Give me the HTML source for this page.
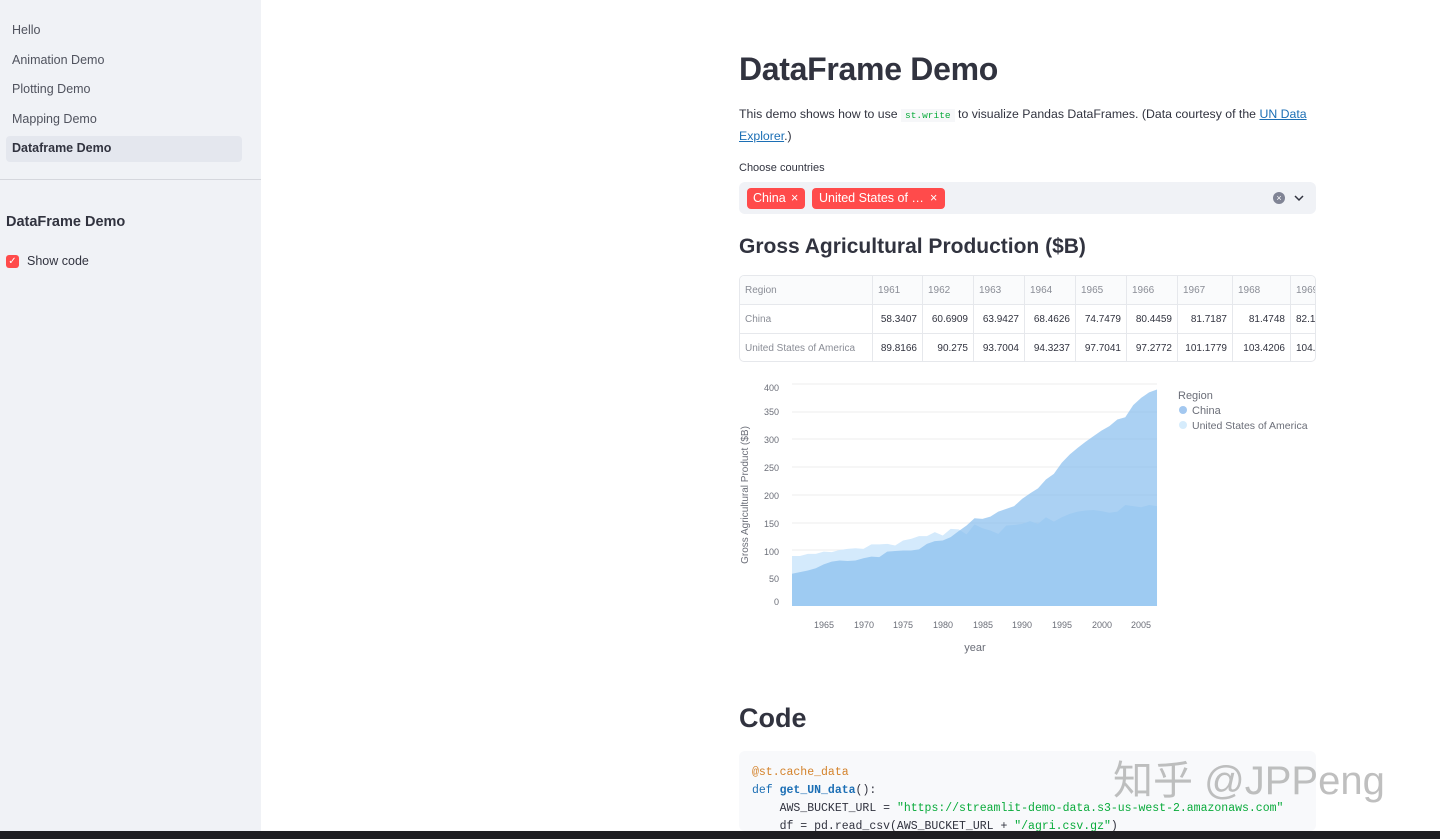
<!DOCTYPE html>
<html><head><meta charset="utf-8"><style>
*{margin:0;padding:0;box-sizing:border-box}
body{width:1440px;height:839px;overflow:hidden;background:#fff;font-family:"Liberation Sans",sans-serif;color:#31333f;position:relative}
.abs{position:absolute}
#side{left:0;top:0;width:261px;height:831px;background:#f0f2f6}
.nav{position:absolute;left:12px;font-size:12.5px;color:#50535e}
#bar{left:0;top:831px;width:1440px;height:8px;background:#1e1e22}
table{border-collapse:collapse;font-size:10px;table-layout:fixed}
td{border:1px solid #e6e8ec;height:29px;padding:0 5px;text-align:right;white-space:nowrap;overflow:hidden;color:#31333f}
td.h{color:#8a8d96;text-align:left}
tr:first-child td{background:#fafbfc}
.code{font-family:"Liberation Mono",monospace;font-size:11.5px;line-height:18px}
</style></head><body>
<div id="side" class="abs">
<div class="nav" style="top:23px">Hello</div>
<div class="nav" style="top:53px">Animation Demo</div>
<div class="nav" style="top:82px">Plotting Demo</div>
<div class="nav" style="top:112px">Mapping Demo</div>
<div class="abs" style="left:6px;top:136px;width:236px;height:26px;background:#e4e7ee;border-radius:4px"></div>
<div class="nav" style="top:141px;font-weight:bold;color:#31333f">Dataframe Demo</div>
<div class="abs" style="left:0;top:179px;width:261px;height:1px;background:#d5d7dd"></div>
<div class="abs" style="left:6px;top:214px;font-size:14.5px;font-weight:bold;color:#31333f">DataFrame Demo</div>
<div class="abs" style="left:6px;top:255px;width:13px;height:13px;background:#ff4b4b;border-radius:3px;color:#fff;font-size:10px;line-height:13px;text-align:center">✓</div>
<div class="abs" style="left:27px;top:254px;font-size:12.5px">Show code</div>
</div>

<div class="abs" style="left:739px;top:51px;font-size:32px;font-weight:bold;letter-spacing:-0.3px">DataFrame Demo</div>
<div class="abs" style="left:739px;top:104px;width:580px;font-size:12.3px;line-height:21px">This demo shows how to use <span style="font-family:'Liberation Mono',monospace;font-size:9.5px;color:#09ab3b;background:#f6f7f9;padding:1px 4px">st.write</span> to visualize Pandas DataFrames. (Data courtesy of the <span style="color:#1c6fb5;text-decoration:underline">UN Data<br>Explorer</span>.)</div>
<div class="abs" style="left:739px;top:162px;font-size:11px">Choose countries</div>
<div class="abs" style="left:739px;top:182px;width:577px;height:32px;background:#f0f2f6;border-radius:6px"></div>
<div class="abs" style="left:747px;top:188px;width:58px;height:21px;background:#ff4b4b;border-radius:4px;color:#fff;font-size:12.5px;line-height:21px;padding-left:6px;white-space:nowrap">China <span style="position:absolute;left:44px">×</span></div>
<div class="abs" style="left:812px;top:188px;width:133px;height:21px;background:#ff4b4b;border-radius:4px;color:#fff;font-size:12.5px;line-height:21px;padding-left:7px;white-space:nowrap">United States of … <span style="position:absolute;left:118px">×</span></div>
<div class="abs" style="left:1273px;top:192px;width:12px;height:12px;border-radius:6px;background:#808495;color:#fff;font-size:9px;line-height:12px;text-align:center">×</div>
<svg class="abs" style="left:1294px;top:194px" width="10" height="8"><path d="M1 2 L5 6 L9 2" stroke="#31333f" stroke-width="1.5" fill="none"/></svg>

<div class="abs" style="left:739px;top:235px;font-size:21px;font-weight:bold">Gross Agricultural Production ($B)</div>

<div class="abs" style="left:739px;top:275px;width:577px;height:87px;overflow:hidden;border:1px solid #e6e8ec;border-radius:5px">
<table style="margin:-1px 0 0 -1px;width:620px">
<colgroup><col style="width:133px"><col style="width:50px"><col style="width:51px"><col style="width:51px"><col style="width:51px"><col style="width:51px"><col style="width:51px"><col style="width:55px"><col style="width:58px"><col style="width:69px"></colgroup>
<tr><td class="h">Region</td><td class="h">1961</td><td class="h">1962</td><td class="h">1963</td><td class="h">1964</td><td class="h">1965</td><td class="h">1966</td><td class="h">1967</td><td class="h">1968</td><td class="h">1969</td></tr>
<tr><td class="h">China</td><td>58.3407</td><td>60.6909</td><td>63.9427</td><td>68.4626</td><td>74.7479</td><td>80.4459</td><td>81.7187</td><td>81.4748</td><td style="text-align:left">82.1</td></tr>
<tr><td class="h">United States of America</td><td>89.8166</td><td>90.275</td><td>93.7004</td><td>94.3237</td><td>97.7041</td><td>97.2772</td><td>101.1779</td><td>103.4206</td><td style="text-align:left">104.</td></tr>
</table></div>

<svg class="abs" style="left:730px;top:370px" width="600" height="300" font-family="Liberation Sans,sans-serif">
<g transform="translate(-730,-370)">
<g stroke="#eeeeee" stroke-width="1">
<line x1="792" x2="1157" y1="384" y2="384"/><line x1="792" x2="1157" y1="412" y2="412"/><line x1="792" x2="1157" y1="439" y2="439"/><line x1="792" x2="1157" y1="467" y2="467"/><line x1="792" x2="1157" y1="495" y2="495"/><line x1="792" x2="1157" y1="523" y2="523"/><line x1="792" x2="1157" y1="550" y2="550"/><line x1="792" x2="1157" y1="578" y2="578"/>
</g>
<g transform="translate(792,606) scale(7.935,-0.555)">
<polygon fill="#d4eafc" points="0,0 0,90 1,90 2,94 3,94 4,98 5,97 6,101 7,103 8,104 9,103 10,111 11,111 12,112 13,109 14,118 15,121 16,126 17,126 18,133 19,127 20,139 21,138 22,129 23,147 24,140 25,136 26,130 27,145 28,146 29,148 30,153 31,148 32,160 33,152 34,160 35,166 36,170 37,172 38,173 39,171 40,168 41,170 42,182 43,180 44,178 45,182 46,180 46,0"/>
<polygon fill="#88bdee" fill-opacity="0.7" points="0,0 0,58 1,61 2,64 3,68 4,75 5,80 6,82 7,81 8,82 9,86 10,89 11,88 12,98 13,99 14,100 15,100 16,102 17,112 18,117 19,118 20,124 21,135 22,145 23,158 24,157 25,161 26,170 27,175 28,180 29,193 30,203 31,212 32,228 33,238 34,258 35,273 36,285 37,296 38,306 39,316 40,324 41,336 42,340 43,362 44,375 45,385 46,390 46,0"/>
</g>
<g font-size="9" fill="#6b6e78" text-anchor="end">
<text x="779" y="391">400</text><text x="779" y="415">350</text><text x="779" y="443">300</text><text x="779" y="471">250</text><text x="779" y="499">200</text><text x="779" y="527">150</text><text x="779" y="555">100</text><text x="779" y="582">50</text><text x="779" y="605">0</text>
</g>
<g font-size="9" fill="#6b6e78" text-anchor="middle">
<text x="824" y="628">1965</text><text x="864" y="628">1970</text><text x="903" y="628">1975</text><text x="943" y="628">1980</text><text x="983" y="628">1985</text><text x="1022" y="628">1990</text><text x="1062" y="628">1995</text><text x="1102" y="628">2000</text><text x="1141" y="628">2005</text>
</g>
<text x="975" y="651" font-size="11" fill="#6b6e78" text-anchor="middle">year</text>
<text transform="translate(748,495) rotate(-90)" font-size="10" fill="#6b6e78" text-anchor="middle">Gross Agricultural Product ($B)</text>
<text x="1178" y="399" font-size="11" fill="#6b6e78">Region</text>
<circle cx="1183" cy="410" r="4" fill="#a3c8f0"/><text x="1192" y="414" font-size="11" fill="#6b6e78">China</text>
<circle cx="1183" cy="425" r="4" fill="#d6ecfc"/><text x="1192" y="429" font-size="10.5" fill="#6b6e78">United States of America</text>
</g></svg>

<div class="abs" style="left:739px;top:703px;font-size:27px;font-weight:bold">Code</div>
<div class="abs code" style="left:739px;top:751px;width:577px;height:80px;background:#f8f9fb;border-radius:6px;padding:13px 13px;white-space:pre;color:#31333f;overflow:hidden"><span style="color:#d4822a">@st.cache_data</span>
<span style="color:#1c6fb5">def</span> <b style="color:#1c6fb5">get_UN_data</b>():
    AWS_BUCKET_URL = <span style="color:#09ab3b">"https://streamlit-demo-data.s3-us-west-2.amazonaws.com"</span>
    df = pd.read_csv(AWS_BUCKET_URL + <span style="color:#09ab3b">"/agri.csv.gz"</span>)</div>
<div class="abs" style="left:1113px;top:748px;font-size:40px;color:rgba(170,170,170,0.75);font-family:'Liberation Sans','Noto Sans CJK SC',sans-serif">知乎 @JPPeng</div>
<div id="bar" class="abs"></div>
</body></html>
